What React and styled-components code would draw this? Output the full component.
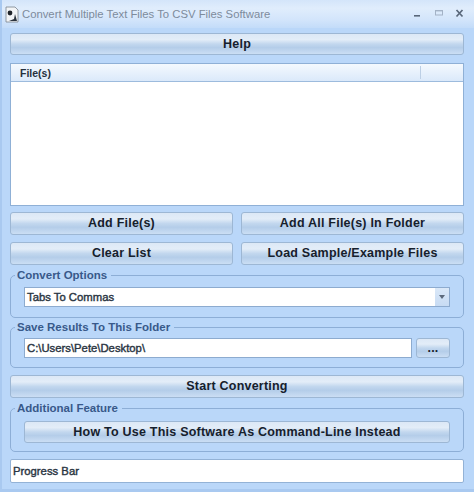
import React from 'react'
import styled, { createGlobalStyle } from 'styled-components'

const GlobalStyle = createGlobalStyle`
  html, body {
    margin: 0;
    padding: 0;
    background: #bcd8f8;
  }
  * {
    box-sizing: border-box;
  }
`

const Window = styled.div`
  width: 474px;
  height: 492px;
  overflow: hidden;
  display: flex;
  flex-direction: column;
  background: #bad7f9;
  border-left: 2px solid #a9c9f0;
  border-bottom: 3px solid #a9c9f0;
  font-family: 'Liberation Sans', Arial, sans-serif;
`

const TitleBar = styled.div`
  height: 28px;
  flex: none;
  display: flex;
  align-items: center;
  padding: 0 6px 0 2px;
  background: linear-gradient(#d4e5fa 0%, #e0edfc 30%, #d3e5fb 70%, #c3dcf9 100%);
`

const TitleText = styled.span`
  margin-left: 2px;
  flex: 1;
  font-size: 11.3px;
  color: #7d8b9c;
  white-space: nowrap;
`

const Content = styled.div`
  flex: 1;
  display: flex;
  flex-direction: column;
  padding: 5px 10px 0 8px;
`

const Button = styled.button`
  display: flex;
  align-items: center;
  justify-content: center;
  flex: ${p => p.$grow ? '1' : 'none'};
  width: ${p => p.$width || 'auto'};
  height: ${p => p.$height || '23px'};
  margin-top: ${p => p.$above || '0'};
  margin-bottom: ${p => p.$below || '0'};
  padding: 0 0 1px;
  border: 1px solid #9db7d4;
  border-radius: 3px;
  background: linear-gradient(#dce8f6 0%, #e3edf8 28%, #c2d7ee 50%, #b4cde9 68%, #cbdef4 100%);
  font-family: inherit;
  font-size: 12.5px;
  font-weight: bold;
  color: #16202c;
  letter-spacing: 0.22px;
  white-space: nowrap;
`

const FileList = styled.div`
  height: 143px;
  flex: none;
  margin-bottom: 6px;
  border: 1px solid #8fb0d6;
  background: #fff;
`

const ListHeader = styled.div`
  height: 18px;
  display: flex;
  align-items: center;
  padding-left: 9px;
  border-bottom: 1px solid #9dbbdd;
  background: linear-gradient(#f4f9fe, #dbe9fa);
`

const HeaderLabel = styled.span`
  width: 400px;
  font-size: 10.5px;
  font-weight: bold;
  color: #26313e;
`

const HeaderDivider = styled.span`
  width: 1px;
  height: 13px;
  background: #bccfe5;
`

const ButtonRow = styled.div`
  display: flex;
  gap: 8px;
  margin-bottom: ${p => p.$below};
`

const Group = styled.fieldset`
  margin: 0 0 ${p => p.$below || '0'};
  height: ${p => p.$height};
  padding: 0 13px;
  border: 1px solid #8daed6;
  border-radius: 5px;
  display: flex;
  align-items: flex-start;
  gap: 4px;
`

const GroupTitle = styled.legend`
  padding: 0 4px 0 2px;
  margin-left: -9px;
  font-size: 11.5px;
  font-weight: bold;
  line-height: 13px;
  color: #38598a;
`

const Combo = styled.div`
  flex: 1;
  height: 20px;
  margin-top: ${p => p.$above};
  display: flex;
  align-items: center;
  justify-content: space-between;
  border: 1px solid #8dabcf;
  background: #fff;
`

const FieldText = styled.span`
  padding: 0 0 1px 2px;
  font-size: 11.3px;
  color: #2a3542;
  -webkit-text-stroke: 0.4px #2a3542;
`

const ComboArrow = styled.span`
  width: 14px;
  height: 100%;
  display: flex;
  align-items: center;
  justify-content: center;
  background: linear-gradient(#dae8f8, #c7dbf3);
`

const Progress = styled.div`
  height: 24px;
  flex: none;
  display: flex;
  align-items: center;
  border: 1px solid #93b2d6;
  border-radius: 2px;
  background: #fff;
`

export default function App() {
  return (
    <Window>
      <GlobalStyle />
      <TitleBar>
        <svg width="16" height="18" viewBox="0 0 16 18">
          <path d="M2 2h9l3 3v12H2z" fill="#f2f4f6" stroke="#7a838e" strokeWidth="0.8" />
          <circle cx="6" cy="8" r="2.4" fill="#20242a" />
          <path d="M11 9l-1 5-5 2h8z" fill="#2b333d" />
        </svg>
        <TitleText>Convert Multiple Text Files To CSV Files Software</TitleText>
        <svg width="62" height="14" viewBox="0 0 62 14">
          <rect x="8" y="8" width="6" height="1.6" fill="#59677a" />
          <rect x="29.5" y="3.5" width="7" height="4.5" fill="none" stroke="#a3b2c6" strokeWidth="1" />
          <rect x="29" y="3" width="8" height="1.4" fill="#a3b2c6" />
          <path d="M50.5 3l6 6.5M56.5 3l-6 6.5" stroke="#59677a" strokeWidth="1.7" />
        </svg>
      </TitleBar>
      <Content>
        <Button $height="22px" $below="8px">Help</Button>
        <FileList>
          <ListHeader>
            <HeaderLabel>File(s)</HeaderLabel>
            <HeaderDivider />
          </ListHeader>
        </FileList>
        <ButtonRow $below="7px">
          <Button $grow>Add File(s)</Button>
          <Button $grow>Add All File(s) In Folder</Button>
        </ButtonRow>
        <ButtonRow $below="4px">
          <Button $grow>Clear List</Button>
          <Button $grow>Load Sample/Example Files</Button>
        </ButtonRow>
        <Group $height="49px" $below="3px">
          <GroupTitle>Convert Options</GroupTitle>
          <Combo $above="5px">
            <FieldText>Tabs To Commas</FieldText>
            <ComboArrow>
              <svg width="6" height="4" viewBox="0 0 6 4"><path d="M0 0h6L3 4z" fill="#5c6a7c" /></svg>
            </ComboArrow>
          </Combo>
        </Group>
        <Group $height="47px" $below="7px">
          <GroupTitle>Save Results To This Folder</GroupTitle>
          <Combo $above="4px">
            <FieldText>C:\Users\Pete\Desktop\</FieldText>
          </Combo>
          <Button $width="34px" $height="20px" $above="4px">...</Button>
        </Group>
        <Button $below="4px">Start Converting</Button>
        <Group $height="50px" $below="7px">
          <GroupTitle>Additional Feature</GroupTitle>
          <Button $grow $height="22px" $above="6px">How To Use This Software As Command-Line Instead</Button>
        </Group>
        <Progress>
          <FieldText>Progress Bar</FieldText>
        </Progress>
      </Content>
    </Window>
  )
}
